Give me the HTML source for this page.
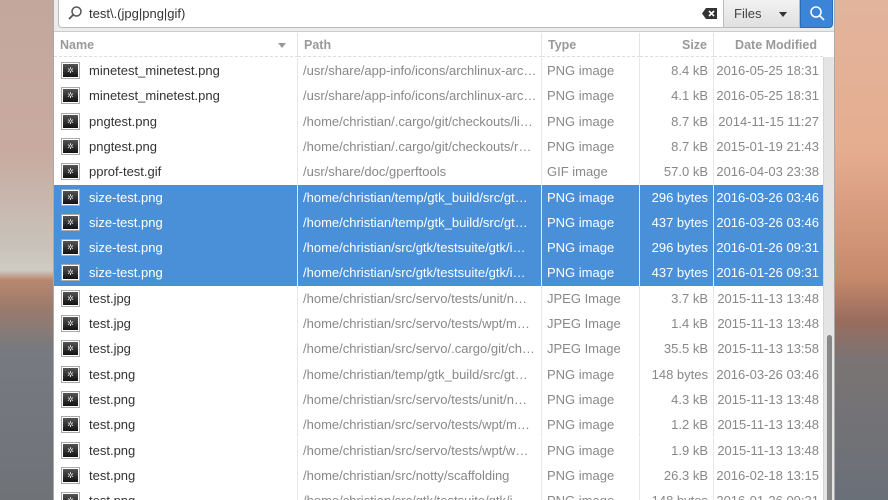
<!DOCTYPE html>
<html style="width:888px;height:500px;overflow:hidden"><head><meta charset="utf-8"><style>
*{margin:0;padding:0;box-sizing:border-box}
html{background:#6f7378}
body{width:888px;height:500px;overflow:hidden;position:relative;font-family:"Liberation Sans",sans-serif;font-size:13px;
background:linear-gradient(180deg,#c3a79d 0%,#c8aaa0 30%,#c9c3bb 50%,#cfccc4 54%,#b8876e 56%,#9a7a6c 62%,#777a80 70%,#6f7378 100%)}
.wr{position:absolute;right:0;top:0;width:54px;height:500px;background:linear-gradient(180deg,#e2b49c 0%,#e5ad90 30%,#c98a6c 55%,#9a6d5e 64%,#7a7474 72%,#6a7078 100%)}
.win{position:absolute;left:53px;top:0;width:782px;height:500px;background:#fff;border-left:1px solid #aaa;border-right:1px solid #aaa;overflow:hidden}
.top{position:absolute;left:0;top:0;width:780px;height:32px;background:#ececec;border-bottom:1px solid #ccc}
.entry{position:absolute;left:4px;top:0;width:666px;height:28px;background:#fff;border:1px solid #bbb;border-top:none;border-radius:0 0 0 4px}
.entry span{position:absolute;left:30px;top:6px;color:#333;font-size:13px}
.files{position:absolute;left:669px;top:0;width:77px;height:28px;background:linear-gradient(#f2f2f2,#e0e0e0);border:1px solid #bbb;border-top:none;color:#444;font-size:13px}
.sb{position:absolute;left:746px;top:0;width:33px;height:28px;background:#3b84d8;border:1px solid #2a6cb8;border-top:none;border-radius:0 0 4px 0}
.hdr{position:absolute;top:33px;height:24px;color:#999;font-weight:bold;font-size:12.5px;line-height:24px;border-right:1px solid #e4e4e4;border-bottom:1px dashed #ddd;padding:0 6px}
.row{position:absolute;left:0;width:769px;height:25.3px;line-height:25px;color:#333}
.row.s{background:#4a90d9;color:#fff}
.c{position:absolute;top:0;height:100%;white-space:nowrap;overflow:hidden;border-right:1px solid #e6e6e6}
.g{color:#888}.row.s .g{color:#fff}
.ic{position:absolute;left:7px;top:4px;width:19px;height:17px;border:1px solid #aaa;background:#fff;padding:1px}
.ic i{display:block;width:15px;height:13px;background:linear-gradient(#555,#111);color:#ddd;font-size:8px;line-height:13px;text-align:center;font-style:normal}
.scr{position:absolute;left:769px;top:57px;width:11px;height:443px;background:#e4e4e4;border-left:1px solid #d4d4d4}
.th{position:absolute;left:3px;top:278px;width:5px;height:170px;background:#888;border-radius:3px}
</style></head><body>
<div class="wr"></div>
<div class="win">
<div class="top">
 <div class="entry"><svg style="position:absolute;left:8px;top:5px" width="16" height="16" viewBox="0 0 16 16"><circle cx="9.5" cy="6.5" r="4.5" fill="none" stroke="#555" stroke-width="1.5"/><path d="M6.3 9.7L2 14" stroke="#555" stroke-width="1.8"/></svg><span>test\.(jpg|png|gif)</span>
 <svg style="position:absolute;left:643px;top:8px" width="15" height="11" viewBox="0 0 15 11"><path d="M4 0H15V11H4L0 5.5Z" fill="#333"/><path d="M7 3l5 5M12 3l-5 5" stroke="#fff" stroke-width="1.6"/></svg></div>
 <div class="files"><span style="position:absolute;left:10px;top:6px">Files</span><span style="position:absolute;left:55px;top:12px;border:4px solid transparent;border-top:5px solid #333"></span></div>
 <div class="sb"><svg style="position:absolute;left:8px;top:5px" width="17" height="17" viewBox="0 0 17 17"><circle cx="7" cy="7" r="5" fill="none" stroke="#fff" stroke-width="1.5"/><path d="M10.5 10.5L15 15" stroke="#fff" stroke-width="1.6"/></svg></div>
</div>
<div class="hdr" style="left:0;width:244px">Name<span style="position:absolute;left:224px;top:10px;border:4px solid transparent;border-top:5px solid #999"></span></div>
<div class="hdr" style="left:244px;width:244px">Path</div>
<div class="hdr" style="left:488px;width:98px">Type</div>
<div class="hdr" style="left:586px;width:74px;text-align:right">Size</div>
<div class="hdr" style="left:660px;width:109px;text-align:right;border-right:none">Date Modified</div>
<div class="scr"><div class="th"></div></div>
</div>
<div style="position:absolute;left:54px;top:58px;width:769px;height:442px;overflow:hidden">
<div class="row" style="top:0"><div class="c" style="left:0;width:244px"><div class="ic"><i>✲</i></div><span style="position:absolute;left:35px">minetest_minetest.png</span></div><div class="c g" style="left:244px;width:244px;padding-left:5px">/usr/share/app-info/icons/archlinux-arc…</div><div class="c g" style="left:488px;width:98px;padding-left:5px">PNG image</div><div class="c g" style="left:586px;width:74px;text-align:right;padding-right:5px">8.4 kB</div><div class="c g" style="left:660px;width:109px;text-align:right;padding-right:4px;border:none">2016-05-25 18:31</div></div>
<div class="row" style="top:25.3px"><div class="c" style="left:0;width:244px"><div class="ic"><i>✲</i></div><span style="position:absolute;left:35px">minetest_minetest.png</span></div><div class="c g" style="left:244px;width:244px;padding-left:5px">/usr/share/app-info/icons/archlinux-arc…</div><div class="c g" style="left:488px;width:98px;padding-left:5px">PNG image</div><div class="c g" style="left:586px;width:74px;text-align:right;padding-right:5px">4.1 kB</div><div class="c g" style="left:660px;width:109px;text-align:right;padding-right:4px;border:none">2016-05-25 18:31</div></div>
<div class="row" style="top:50.6px"><div class="c" style="left:0;width:244px"><div class="ic"><i>✲</i></div><span style="position:absolute;left:35px">pngtest.png</span></div><div class="c g" style="left:244px;width:244px;padding-left:5px">/home/christian/.cargo/git/checkouts/li…</div><div class="c g" style="left:488px;width:98px;padding-left:5px">PNG image</div><div class="c g" style="left:586px;width:74px;text-align:right;padding-right:5px">8.7 kB</div><div class="c g" style="left:660px;width:109px;text-align:right;padding-right:4px;border:none">2014-11-15 11:27</div></div>
<div class="row" style="top:75.9px"><div class="c" style="left:0;width:244px"><div class="ic"><i>✲</i></div><span style="position:absolute;left:35px">pngtest.png</span></div><div class="c g" style="left:244px;width:244px;padding-left:5px">/home/christian/.cargo/git/checkouts/r…</div><div class="c g" style="left:488px;width:98px;padding-left:5px">PNG image</div><div class="c g" style="left:586px;width:74px;text-align:right;padding-right:5px">8.7 kB</div><div class="c g" style="left:660px;width:109px;text-align:right;padding-right:4px;border:none">2015-01-19 21:43</div></div>
<div class="row" style="top:101.2px"><div class="c" style="left:0;width:244px"><div class="ic"><i>✲</i></div><span style="position:absolute;left:35px">pprof-test.gif</span></div><div class="c g" style="left:244px;width:244px;padding-left:5px">/usr/share/doc/gperftools</div><div class="c g" style="left:488px;width:98px;padding-left:5px">GIF image</div><div class="c g" style="left:586px;width:74px;text-align:right;padding-right:5px">57.0 kB</div><div class="c g" style="left:660px;width:109px;text-align:right;padding-right:4px;border:none">2016-04-03 23:38</div></div>
<div class="row s" style="top:126.5px"><div class="c" style="left:0;width:244px"><div class="ic"><i>✲</i></div><span style="position:absolute;left:35px">size-test.png</span></div><div class="c g" style="left:244px;width:244px;padding-left:5px">/home/christian/temp/gtk_build/src/gt…</div><div class="c g" style="left:488px;width:98px;padding-left:5px">PNG image</div><div class="c g" style="left:586px;width:74px;text-align:right;padding-right:5px">296 bytes</div><div class="c g" style="left:660px;width:109px;text-align:right;padding-right:4px;border:none">2016-03-26 03:46</div></div>
<div class="row s" style="top:151.8px"><div class="c" style="left:0;width:244px"><div class="ic"><i>✲</i></div><span style="position:absolute;left:35px">size-test.png</span></div><div class="c g" style="left:244px;width:244px;padding-left:5px">/home/christian/temp/gtk_build/src/gt…</div><div class="c g" style="left:488px;width:98px;padding-left:5px">PNG image</div><div class="c g" style="left:586px;width:74px;text-align:right;padding-right:5px">437 bytes</div><div class="c g" style="left:660px;width:109px;text-align:right;padding-right:4px;border:none">2016-03-26 03:46</div></div>
<div class="row s" style="top:177.1px"><div class="c" style="left:0;width:244px"><div class="ic"><i>✲</i></div><span style="position:absolute;left:35px">size-test.png</span></div><div class="c g" style="left:244px;width:244px;padding-left:5px">/home/christian/src/gtk/testsuite/gtk/i…</div><div class="c g" style="left:488px;width:98px;padding-left:5px">PNG image</div><div class="c g" style="left:586px;width:74px;text-align:right;padding-right:5px">296 bytes</div><div class="c g" style="left:660px;width:109px;text-align:right;padding-right:4px;border:none">2016-01-26 09:31</div></div>
<div class="row s" style="top:202.4px"><div class="c" style="left:0;width:244px"><div class="ic"><i>✲</i></div><span style="position:absolute;left:35px">size-test.png</span></div><div class="c g" style="left:244px;width:244px;padding-left:5px">/home/christian/src/gtk/testsuite/gtk/i…</div><div class="c g" style="left:488px;width:98px;padding-left:5px">PNG image</div><div class="c g" style="left:586px;width:74px;text-align:right;padding-right:5px">437 bytes</div><div class="c g" style="left:660px;width:109px;text-align:right;padding-right:4px;border:none">2016-01-26 09:31</div></div>
<div class="row" style="top:227.7px"><div class="c" style="left:0;width:244px"><div class="ic"><i>✲</i></div><span style="position:absolute;left:35px">test.jpg</span></div><div class="c g" style="left:244px;width:244px;padding-left:5px">/home/christian/src/servo/tests/unit/n…</div><div class="c g" style="left:488px;width:98px;padding-left:5px">JPEG Image</div><div class="c g" style="left:586px;width:74px;text-align:right;padding-right:5px">3.7 kB</div><div class="c g" style="left:660px;width:109px;text-align:right;padding-right:4px;border:none">2015-11-13 13:48</div></div>
<div class="row" style="top:253px"><div class="c" style="left:0;width:244px"><div class="ic"><i>✲</i></div><span style="position:absolute;left:35px">test.jpg</span></div><div class="c g" style="left:244px;width:244px;padding-left:5px">/home/christian/src/servo/tests/wpt/m…</div><div class="c g" style="left:488px;width:98px;padding-left:5px">JPEG Image</div><div class="c g" style="left:586px;width:74px;text-align:right;padding-right:5px">1.4 kB</div><div class="c g" style="left:660px;width:109px;text-align:right;padding-right:4px;border:none">2015-11-13 13:48</div></div>
<div class="row" style="top:278.3px"><div class="c" style="left:0;width:244px"><div class="ic"><i>✲</i></div><span style="position:absolute;left:35px">test.jpg</span></div><div class="c g" style="left:244px;width:244px;padding-left:5px">/home/christian/src/servo/.cargo/git/ch…</div><div class="c g" style="left:488px;width:98px;padding-left:5px">JPEG Image</div><div class="c g" style="left:586px;width:74px;text-align:right;padding-right:5px">35.5 kB</div><div class="c g" style="left:660px;width:109px;text-align:right;padding-right:4px;border:none">2015-11-13 13:58</div></div>
<div class="row" style="top:303.6px"><div class="c" style="left:0;width:244px"><div class="ic"><i>✲</i></div><span style="position:absolute;left:35px">test.png</span></div><div class="c g" style="left:244px;width:244px;padding-left:5px">/home/christian/temp/gtk_build/src/gt…</div><div class="c g" style="left:488px;width:98px;padding-left:5px">PNG image</div><div class="c g" style="left:586px;width:74px;text-align:right;padding-right:5px">148 bytes</div><div class="c g" style="left:660px;width:109px;text-align:right;padding-right:4px;border:none">2016-03-26 03:46</div></div>
<div class="row" style="top:328.9px"><div class="c" style="left:0;width:244px"><div class="ic"><i>✲</i></div><span style="position:absolute;left:35px">test.png</span></div><div class="c g" style="left:244px;width:244px;padding-left:5px">/home/christian/src/servo/tests/unit/n…</div><div class="c g" style="left:488px;width:98px;padding-left:5px">PNG image</div><div class="c g" style="left:586px;width:74px;text-align:right;padding-right:5px">4.3 kB</div><div class="c g" style="left:660px;width:109px;text-align:right;padding-right:4px;border:none">2015-11-13 13:48</div></div>
<div class="row" style="top:354.2px"><div class="c" style="left:0;width:244px"><div class="ic"><i>✲</i></div><span style="position:absolute;left:35px">test.png</span></div><div class="c g" style="left:244px;width:244px;padding-left:5px">/home/christian/src/servo/tests/wpt/m…</div><div class="c g" style="left:488px;width:98px;padding-left:5px">PNG image</div><div class="c g" style="left:586px;width:74px;text-align:right;padding-right:5px">1.2 kB</div><div class="c g" style="left:660px;width:109px;text-align:right;padding-right:4px;border:none">2015-11-13 13:48</div></div>
<div class="row" style="top:379.5px"><div class="c" style="left:0;width:244px"><div class="ic"><i>✲</i></div><span style="position:absolute;left:35px">test.png</span></div><div class="c g" style="left:244px;width:244px;padding-left:5px">/home/christian/src/servo/tests/wpt/w…</div><div class="c g" style="left:488px;width:98px;padding-left:5px">PNG image</div><div class="c g" style="left:586px;width:74px;text-align:right;padding-right:5px">1.9 kB</div><div class="c g" style="left:660px;width:109px;text-align:right;padding-right:4px;border:none">2015-11-13 13:48</div></div>
<div class="row" style="top:404.8px"><div class="c" style="left:0;width:244px"><div class="ic"><i>✲</i></div><span style="position:absolute;left:35px">test.png</span></div><div class="c g" style="left:244px;width:244px;padding-left:5px">/home/christian/src/notty/scaffolding</div><div class="c g" style="left:488px;width:98px;padding-left:5px">PNG image</div><div class="c g" style="left:586px;width:74px;text-align:right;padding-right:5px">26.3 kB</div><div class="c g" style="left:660px;width:109px;text-align:right;padding-right:4px;border:none">2016-02-18 13:15</div></div>
<div class="row" style="top:430.1px"><div class="c" style="left:0;width:244px"><div class="ic"><i>✲</i></div><span style="position:absolute;left:35px">test.png</span></div><div class="c g" style="left:244px;width:244px;padding-left:5px">/home/christian/src/gtk/testsuite/gtk/i…</div><div class="c g" style="left:488px;width:98px;padding-left:5px">PNG image</div><div class="c g" style="left:586px;width:74px;text-align:right;padding-right:5px">148 bytes</div><div class="c g" style="left:660px;width:109px;text-align:right;padding-right:4px;border:none">2016-01-26 09:31</div></div>
</div>
</body></html>
